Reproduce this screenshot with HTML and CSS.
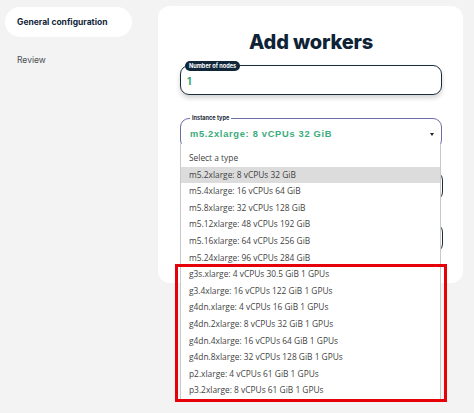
FILE: index.html
```html
<!DOCTYPE html>
<html>
<head>
<meta charset="utf-8">
<link rel="stylesheet" href="styles.css">
</head>
<body>
<div class="page">
  <nav class="sidebar">
    <div class="step active">General configuration</div>
    <div class="step">Review</div>
  </nav>
  <main class="card">
    <h1 class="title">Add workers</h1>
    <div class="field nodes">
      <span class="pill-label">Number of nodes</span>
      <span class="value">1</span>
    </div>
    <div class="select-wrap">
      <fieldset class="select">
        <legend>Instance type</legend>
        <span class="select-value">m5.2xlarge: 8 vCPUs 32 GiB</span>
        <span class="arrow"></span>
      </fieldset>
      <ul class="menu">
        <li>Select a type</li>
        <li class="hl">m5.2xlarge: 8 vCPUs 32 GiB</li>
        <li>m5.4xlarge: 16 vCPUs 64 GiB</li>
        <li>m5.8xlarge: 32 vCPUs 128 GiB</li>
        <li>m5.12xlarge: 48 vCPUs 192 GiB</li>
        <li>m5.16xlarge: 64 vCPUs 256 GiB</li>
        <li>m5.24xlarge: 96 vCPUs 284 GiB</li>
        <li>g3s.xlarge: 4 vCPUs 30.5 GiB 1 GPUs</li>
        <li>g3.4xlarge: 16 vCPUs 122 GiB 1 GPUs</li>
        <li>g4dn.xlarge: 4 vCPUs 16 GiB 1 GPUs</li>
        <li>g4dn.2xlarge: 8 vCPUs 32 GiB 1 GPUs</li>
        <li>g4dn.4xlarge: 16 vCPUs 64 GiB 1 GPUs</li>
        <li>g4dn.8xlarge: 32 vCPUs 128 GiB 1 GPUs</li>
        <li>p2.xlarge: 4 vCPUs 61 GiB 1 GPUs</li>
        <li>p3.2xlarge: 8 vCPUs 61 GiB 1 GPUs</li>
      </ul>
    </div>
    <div class="field hidden-field one"></div>
    <div class="field hidden-field two"></div>
  </main>
</div>
<div class="annotation"></div>
</body>
</html>
```
FILE: styles.css
```css
* { box-sizing: border-box; }
html, body { margin: 0; padding: 0; }
body {
  background: #f3f3f3;
  font-family: "Inter", "Liberation Sans", sans-serif;
  width: 474px;
  height: 413px;
  overflow: hidden;
}
.page {
  display: flex;
  padding-top: 6px;
}
.sidebar {
  width: 158px;
  flex: none;
  padding-left: 5px;
  padding-top: 1px;
}
.step {
  font-size: 8.5px;
  color: #4a4f55;
  padding-left: 12px;
  height: 30px;
  line-height: 30px;
}
.step.active {
  width: 127px;
  background: #fff;
  border-radius: 15px;
  font-weight: 700;
  color: #12263a;
  margin-bottom: 8px;
}
.card {
  width: 305px;
  height: 277px;
  background: #fff;
  border-radius: 12px;
  padding: 0 21px 0 22px;
  position: relative;
}
.title {
  margin: 21px 0 0;
  text-align: center;
  font-size: 20px;
  font-weight: 800;
  color: #0f2336;
  line-height: 30px;
  letter-spacing: -0.2px;
}
.field {
  position: relative;
  height: 30px;
  border: 1.5px solid #1b2d3d;
  border-radius: 9px;
}
.nodes {
  margin-top: 8px;
  box-shadow: 0 3px 5px rgba(0, 0, 0, 0.18);
  display: flex;
  align-items: center;
  padding-left: 6px;
}
.pill-label {
  position: absolute;
  left: 4px;
  top: -5.5px;
  background: #10263a;
  color: #fff;
  font-size: 5.6px;
  font-weight: 700;
  line-height: 10px;
  padding: 0 4px;
  border-radius: 5px;
}
.value {
  color: #34a56f;
  font-size: 10px;
  font-weight: 700;
  margin-top: 2px;
}
.select-wrap {
  position: relative;
  margin-top: 24px;
}
.select {
  margin: 0;
  height: 35px;
  border: 1px solid #6d6ca6;
  border-radius: 9px;
  padding: 0 8px;
  position: relative;
  display: flex;
  align-items: center;
  margin-top: -5px;
}
.select legend {
  font-size: 5.6px;
  font-weight: 700;
  color: #1c2c3a;
  padding: 0 2px;
  margin-left: 1px;
  line-height: 8px;
}
.select-value {
  font-family: "Liberation Sans", sans-serif;
  font-size: 9.3px;
  font-weight: 700;
  letter-spacing: 0.7px;
  color: #3aab7b;
  margin-top: -3px;
  padding-left: 1px;
}
.arrow {
  position: absolute;
  right: 7px;
  top: 11px;
  width: 0;
  height: 0;
  border-left: 2.5px solid transparent;
  border-right: 2.5px solid transparent;
  border-top: 3px solid #222;
}
.menu {
  position: absolute;
  left: 0;
  top: 30px;
  width: 261px;
  margin: 0;
  padding: 6px 0 1px;
  list-style: none;
  background: #fff;
  border: 1px solid #c9c9c9;
  border-top: none;
  z-index: 2;
}
.menu li {
  height: 16.6px;
  line-height: 16.6px;
  padding-left: 8px;
  font-family: "Open Sans", sans-serif;
  font-size: 8.4px;
  color: #3f3f3f;
  white-space: nowrap;
}
.menu li.hl {
  background: #dcdcdc;
}
.hidden-field.one {
  margin-top: 22px;
  width: 263px;
}
.hidden-field.two {
  margin-top: 22px;
  width: 263px;
}
.annotation {
  position: absolute;
  left: 175px;
  top: 264px;
  width: 272px;
  height: 138px;
  border: 3px solid #e6000a;
  z-index: 5;
}
```
